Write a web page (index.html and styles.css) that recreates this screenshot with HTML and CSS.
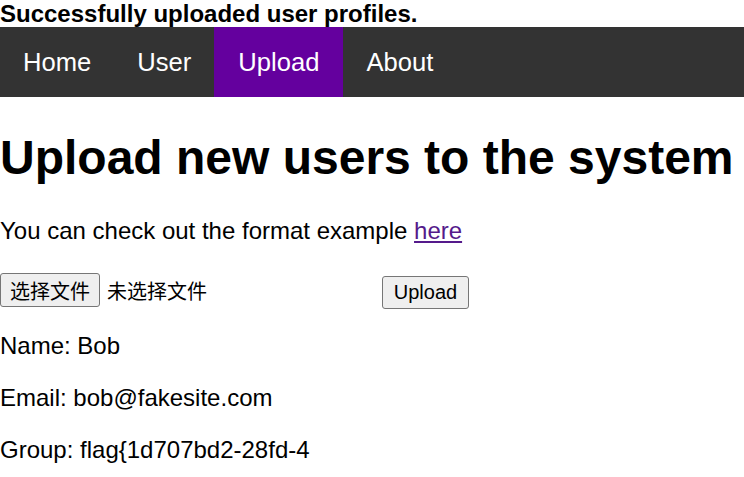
FILE: index.html
```html
<!DOCTYPE html>
<html>
<head>
<meta charset="utf-8">
<link rel="stylesheet" href="styles.css">
</head>
<body>
<div class="flash">Successfully uploaded user profiles.</div>
<nav class="topnav">
  <a href="#" class="nav-link">Home</a>
  <a href="#" class="nav-link">User</a>
  <a href="#" class="nav-link active">Upload</a>
  <a href="#" class="nav-link">About</a>
</nav>
<h1 class="title">Upload new users to the system</h1>
<p class="text">You can check out the format example <a href="#" class="visited-link">here</a></p>
<form class="upload-form">
  <span class="file-input"><span class="btn btn-choose">选择文件</span><span class="file-label">未选择文件</span></span>
  <span class="btn btn-upload">Upload</span>
</form>
<p class="text">Name: Bob</p>
<p class="text">Email: bob@fakesite.com</p>
<p class="text">Group: flag{1d707bd2-28fd-4</p>
</body>
</html>
```

FILE: styles.css
```css
html, body {
  margin: 0;
  padding: 0;
  background: #ffffff;
  color: #000000;
  font-family: "Liberation Sans", Arial, "Noto Sans CJK SC", sans-serif;
  font-size: 24px;
}
.flash {
  font-weight: bold;
  line-height: 27px;
}
.topnav {
  display: flex;
  background: #333333;
  height: 70px;
}
.nav-link {
  display: flex;
  align-items: center;
  padding: 0 23px;
  color: #ffffff;
  text-decoration: none;
  font-size: 25.6px;
}
.nav-link.active {
  background: #64009e;
  padding: 0 24px;
}
.title {
  font-size: 48px;
  font-weight: bold;
  margin: 33px 0 32px;
  line-height: 55px;
}
.text {
  margin: 24px 0;
  line-height: 28px;
}
.visited-link {
  color: #551a8b;
}
.upload-form {
  display: flex;
  align-items: flex-start;
  gap: 5px;
  margin: 0;
  height: 35px;
  padding-top: 4px;
}
.file-input {
  display: flex;
  align-items: center;
  width: 377px;
  gap: 7px;
}
.btn {
  display: inline-flex;
  align-items: center;
  justify-content: center;
  box-sizing: border-box;
  background: #efefef;
  border: 1px solid #767676;
  border-radius: 3px;
  font-family: "Liberation Sans", Arial, "Noto Sans CJK SC", sans-serif;
  font-size: 20px;
  color: #000;
  padding: 0 8px;
}
.btn-choose {
  height: 34px;
  width: 100px;
}
.file-label {
  font-family: "Noto Sans CJK SC", sans-serif;
  font-size: 20px;
}
.btn-upload {
  height: 33px;
  width: 87px;
  margin-top: 3px;
}
```
